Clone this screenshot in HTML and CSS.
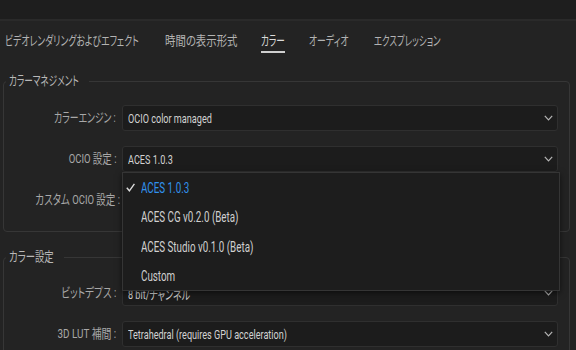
FILE: index.html
```html
<!DOCTYPE html>
<html lang="ja">
<head>
<meta charset="utf-8">
<title>カラー設定</title>
<link rel="stylesheet" href="styles.css">
</head>
<body>
<div class="topbar"></div>
<nav class="tabs">
  <div class="tab t1"><span class="jp s68">ビデオレンダリングおよびエフェクト</span></div>
  <div class="tab t2"><span class="jp">時間の表示形式</span></div>
  <div class="tab t3 active"><span class="jp s66">カラー</span></div>
  <div class="tab t4"><span class="jp s68">オーディオ</span></div>
  <div class="tab t5"><span class="jp s65">エクスプレッション</span></div>
</nav>

<fieldset class="group g1">
  <legend><span class="legend-text lw1"><span class="jp s66">カラーマネジメント</span></span></legend>
  <div class="rows">
    <div class="lbl"><span class="s68">カラーエンジン :</span></div>
    <div class="select">
      <span class="val"><span class="lat">OCIO color managed</span></span>
      <svg class="chev" viewBox="0 0 9 6"><path d="M0.8 0.8 L4.5 4.8 L8.2 0.8" /></svg>
    </div>

    <div class="lbl"><span class="s73">OCIO 設定 :</span></div>
    <div class="select">
      <span class="val"><span class="lat">ACES 1.0.3</span></span>
      <svg class="chev" viewBox="0 0 9 6"><path d="M0.8 0.8 L4.5 4.8 L8.2 0.8" /></svg>
      <div class="menu">
        <div class="item sel"><svg class="check" viewBox="0 0 9 9"><path d="M0.8 4.8 L3.4 7.8 L8.4 0.8" /></svg><span class="lat">ACES 1.0.3</span></div>
        <div class="item"><span class="lat">ACES CG v0.2.0 (Beta)</span></div>
        <div class="item"><span class="lat">ACES Studio v0.1.0 (Beta)</span></div>
        <div class="item"><span class="lat">Custom</span></div>
      </div>
    </div>

    <div class="lbl"><span class="s73">カスタム OCIO 設定 :</span></div>
    <div class="select">
      <span class="val"><span class="lat"></span></span>
      <svg class="chev" viewBox="0 0 9 6"><path d="M0.8 0.8 L4.5 4.8 L8.2 0.8" /></svg>
    </div>
  </div>
</fieldset>

<fieldset class="group g2">
  <legend><span class="legend-text lw2"><span class="jp s72">カラー設定</span></span></legend>
  <div class="rows">
    <div class="lbl"><span class="s74">ビットデプス :</span></div>
    <div class="select">
      <span class="val"><span class="mix">8 bit/チャンネル</span></span>
      <svg class="chev" viewBox="0 0 9 6"><path d="M0.8 0.8 L4.5 4.8 L8.2 0.8" /></svg>
    </div>

    <div class="lbl"><span class="s76">3D LUT 補間 :</span></div>
    <div class="select">
      <span class="val"><span class="lat">Tetrahedral (requires GPU acceleration)</span></span>
      <svg class="chev" viewBox="0 0 9 6"><path d="M0.8 0.8 L4.5 4.8 L8.2 0.8" /></svg>
    </div>
  </div>
</fieldset>
</body>
</html>
```
FILE: styles.css
```css
* { box-sizing: border-box; }
html, body { margin: 0; padding: 0; }
body {
  width: 576px;
  height: 350px;
  overflow: hidden;
  background: #232323;
  font-family: Roboto, "Noto Sans CJK JP", sans-serif;
  font-size: 13px;
  color: #aaaaaa;
}

.topbar {
  height: 21px;
  background: #1e1e1e;
  border-bottom: 2px solid #2a2a2a;
}

.tabs {
  display: flex;
  gap: 24px;
  padding-left: 5px;
}
.tab {
  flex: none;
  padding: 12px 0 2px;
  line-height: 16px;
  border-bottom: 2px solid transparent;
  color: #b3b3b3;
  white-space: nowrap;
}
.tab.active { border-bottom-color: #cfcfcf; color: #dadada; }
.t1 { width: 136px; }
.t2 { width: 72px; }
.t3 { width: 24px; }
.t4 { width: 41px; }
.t5 { width: 67px; }

.jp {
  display: inline-block;
  font-feature-settings: "palt";
  transform: scaleX(0.8);
  transform-origin: 0 50%;
  white-space: nowrap;
}
.lat {
  display: inline-block;
  transform: scaleX(0.7);
  transform-origin: 0 50%;
  white-space: nowrap;
}
.mix {
  display: inline-block;
  font-feature-settings: "palt";
  transform: scaleX(0.7);
  transform-origin: 0 50%;
  white-space: nowrap;
}

.group {
  margin: 20px 6px 0 3px;
  padding: 0 11px 18px 0;
  border: 1px solid #363636;
  border-radius: 4px;
  min-width: 0;
}
.g2 { margin-top: 17px; }
legend {
  margin-left: 2px;
  padding: 0 8px 0 3px;
  line-height: 16px;
  color: #b8b8b8;
}
.legend-text { display: block; white-space: nowrap; overflow: visible; }
.lw1 { width: 72px; }
.lw2 { width: 47px; }

.rows {
  display: grid;
  grid-template-columns: 112px 1fr;
  column-gap: 6px;
  row-gap: 15px;
  margin-top: 16px;
}
.g2 .rows { margin-top: 15px; }

.lbl {
  text-align: right;
  line-height: 26px;
  white-space: nowrap;
  color: #a8a8a8;
}
.lbl span {
  display: inline-block;
  font-feature-settings: "palt";
  transform: scaleX(0.76);
  transform-origin: 100% 50%;
}

/* per-text horizontal condensing to match the narrow UI face */
.jp.s65 { transform: scaleX(0.65); }
.jp.s66 { transform: scaleX(0.66); }
.jp.s68, .lbl .s68 { transform: scaleX(0.68); }
.jp.s72 { transform: scaleX(0.72); }
.lbl .s73 { transform: scaleX(0.73); }
.lbl .s74 { transform: scaleX(0.74); }
.lbl .s76 { transform: scaleX(0.76); }

.select {
  position: relative;
  height: 26px;
  border: 1px solid #2f2f2f;
  border-radius: 3px;
  background: #1c1c1c;
  display: flex;
  align-items: center;
  padding: 0 4px 0 5px;
  color: #d2d2d2;
}
.val { flex: 1; min-width: 0; white-space: nowrap; }
.chev { flex: none; width: 9px; height: 6px; }
.chev path { fill: none; stroke: #b5b5b5; stroke-width: 1.2; }

.menu {
  position: absolute;
  top: 25px;
  left: -1px;
  right: -3px;
  height: 119px;
  border: 1px solid #353535;
  background: #1d1d1d;
  box-shadow: 0 2px 6px rgba(0, 0, 0, 0.55);
  z-index: 5;
}
.item {
  height: 29.5px;
  display: flex;
  align-items: center;
  padding-left: 18px;
  font-size: 14px;
  color: #d0d0d0;
}
.item.sel { padding-left: 3px; color: #3192ee; }
.check { flex: none; width: 9px; height: 9px; margin-right: 6px; }
.check path { fill: none; stroke: #dcdcdc; stroke-width: 1.4; }
```
